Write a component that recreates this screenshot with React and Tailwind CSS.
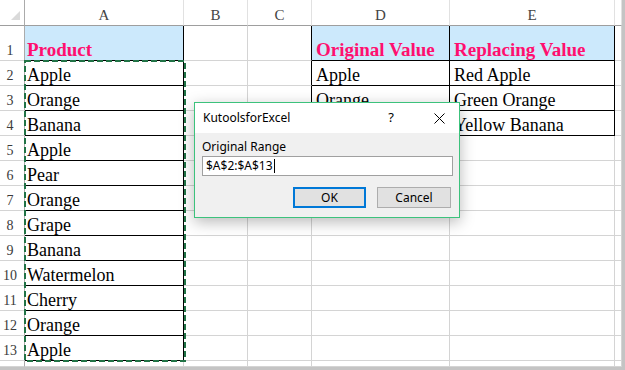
import React from "react";

const colLetters = ["A", "B", "C", "D", "E", ""];

const cells = {
  "1-1": "Product",
  "1-4": "Original Value",
  "1-5": "Replacing Value",
  "2-4": "Apple",
  "3-4": "Orange",
  "4-4": "Banana",
  "2-5": "Red Apple",
  "3-5": "Green Orange",
  "4-5": "Yellow Banana",
};

const fruits = ["Apple", "Orange", "Banana", "Apple", "Pear", "Orange", "Grape", "Banana", "Watermelon", "Cherry", "Orange", "Apple"];
fruits.forEach((f, i) => {
  cells[`${i + 2}-1`] = f;
});

// cells with black borders
const inBox = (r, c) => (c === 1 && r >= 1 && r <= 13) || ((c === 4 || c === 5) && r >= 1 && r <= 4);
const isHead = (r, c) => r === 1 && (c === 1 || c === 4 || c === 5);

function Cell({ r, c }) {
  const text = cells[`${r}-${c}`];
  const right = inBox(r, c) || inBox(r, c + 1) ? "border-r-black" : "border-r-[#d4d4d4]";
  const bottom = inBox(r, c) || inBox(r + 1, c) ? "border-b-black" : "border-b-[#d4d4d4]";
  const head = isHead(r, c);
  return (
    <div
      className={`flex items-end overflow-visible whitespace-nowrap border-r border-b ${right} ${bottom} ${
        head ? "bg-[#cce9fc]" : "bg-white"
      } ${c === 1 ? "pl-[2px]" : "pl-[4px]"} pb-[1px]`}
    >
      {text && (
        <span
          className={
            head
              ? "text-[19px] leading-none font-bold text-[#ff0f6f]"
              : "text-[18px] leading-none text-black"
          }
        >
          {text}
        </span>
      )}
    </div>
  );
}

function Sheet() {
  const rows = Array.from({ length: 14 }, (_, i) => i + 1);
  return (
    <div className="relative grid grid-cols-[25px_159px_64px_64px_138px_165px_7px] grid-rows-[26px_35px_repeat(12,25px)_6px] font-['Liberation_Serif',serif]">
      {/* corner */}
      <div className="relative border-r border-b border-r-[#ababab] border-b-[#9e9e9e] bg-white">
        <div className="absolute right-[4px] bottom-[5px] w-0 h-0 border-l-[9px] border-l-transparent border-b-[9px] border-b-[#dadada]" />
      </div>
      {colLetters.map((l, i) => (
        <div
          key={l + i}
          className="flex items-end justify-center pb-[2px] border-r border-b border-r-[#e1e1e1] border-b-[#9e9e9e] bg-white text-[15px] leading-none text-[#444]"
        >
          {l}
        </div>
      ))}
      {rows.map((r) => (
        <React.Fragment key={r}>
          <div className="flex items-end justify-center pr-[4px] pb-[2px] border-r border-b border-r-[#ababab] border-b-[#d4d4d4] bg-white text-[14px] leading-none text-[#3b3b3b]">
            {r < 14 ? r : ""}
          </div>
          {[1, 2, 3, 4, 5, 6].map((c) => (
            <Cell key={c} r={r} c={c} />
          ))}
        </React.Fragment>
      ))}

      {/* copy marquee around A2:A13 */}
      <svg className="absolute left-[24px] top-[60px]" width="162" height="302">
        <rect x="1" y="1" width="160" height="300" fill="none" stroke="#217346" strokeWidth="2" strokeDasharray="6 3" />
      </svg>

      <Dialog />
    </div>
  );
}

function Dialog() {
  return (
    <div className="absolute left-[194px] top-[102px] w-[266px] h-[116px] border border-[#3cc27c] bg-[#f0f0f0] shadow-[0_4px_14px_rgba(0,0,0,0.28)] font-['Noto_Sans',sans-serif] text-[12px] text-black">
      <div className="flex items-center h-[30px] bg-white pl-[8px]">
        <span>KutoolsforExcel</span>
        <span className="ml-auto mr-[40px] text-[13px]">?</span>
        <svg className="mr-[14px]" width="11" height="11" viewBox="0 0 11 11">
          <path d="M0.5 0.5 L10.5 10.5 M10.5 0.5 L0.5 10.5" stroke="#000" strokeWidth="1" />
        </svg>
      </div>
      <div className="flex flex-col px-[7px] pt-[5px]">
        <span className="leading-[17px]">Original Range</span>
        <div className="mt-[1px] h-[20px] w-[251px] flex items-center border border-[#a0a0a0] bg-white pl-[3px]">
          <span>$A$2:$A$13</span>
          <span className="ml-[1px] w-px h-[14px] bg-black" />
        </div>
        <div className="flex justify-end gap-[11px] mt-[11px] pr-[1px]">
          <button className="w-[73px] h-[21px] border-2 border-[#0078d7] bg-[#e1e1e1] text-[12px] leading-none">OK</button>
          <button className="w-[74px] h-[21px] border border-[#adadad] bg-[#e1e1e1] text-[12px] leading-none">Cancel</button>
        </div>
      </div>
    </div>
  );
}

export default function App() {
  return (
    <div className="w-[625px] h-[370px] overflow-hidden bg-white">
      <div className="w-[625px] h-[370px] border-r-[3px] border-b-[3px] border-[#c4c4c4] overflow-hidden">
        <Sheet />
      </div>
    </div>
  );
}
